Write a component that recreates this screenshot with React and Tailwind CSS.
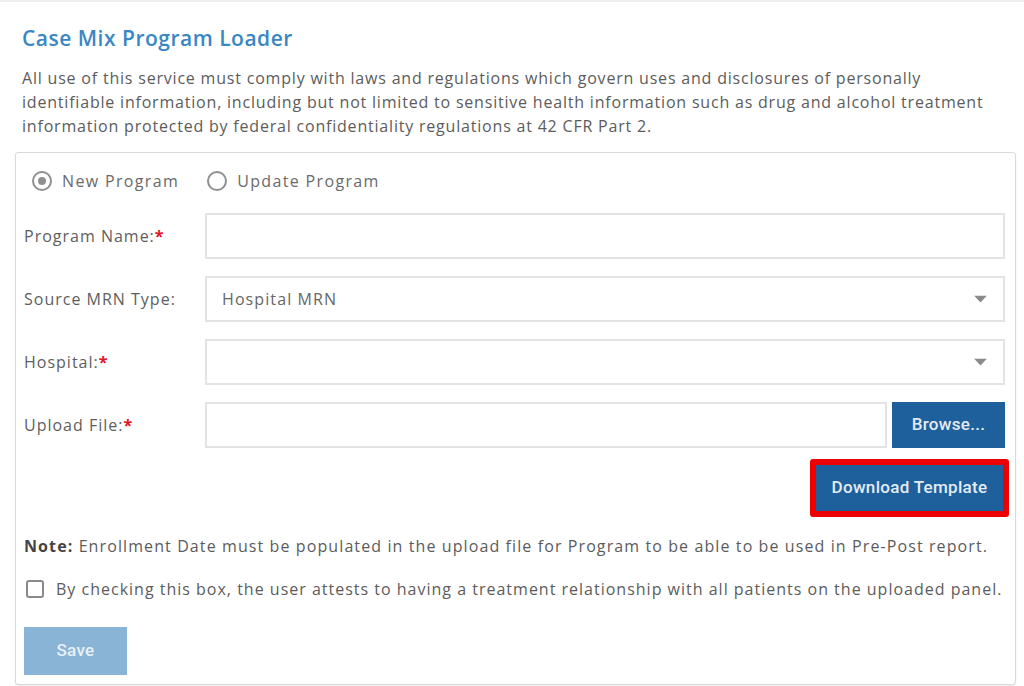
import { useState } from "react";

const labelFont = { fontFamily: "'Open Sans', 'Liberation Sans', sans-serif" };
const btnFont = { fontFamily: "Roboto, 'Liberation Sans', sans-serif" };

function Req() {
  return <span className="text-[#e4151f] font-bold tracking-normal">*</span>;
}

function Caret() {
  return (
    <svg width="13" height="7" viewBox="0 0 13 7" className="absolute right-[16px] top-1/2 -translate-y-1/2">
      <path d="M0 0 L13 0 L6.5 7 Z" fill="#8a8a8a" />
    </svg>
  );
}

function Row({ label, children }) {
  return (
    <div className="flex items-center">
      <div className="w-[181px] shrink-0 text-[16px] text-[#5e5e5e] tracking-[1px]">{label}</div>
      <div className="flex-1 flex gap-[5px]">{children}</div>
    </div>
  );
}

export default function App() {
  const [mode, setMode] = useState("new");
  const [checked, setChecked] = useState(false);

  return (
    <div className="w-[1024px] h-[686px] bg-white overflow-hidden border-t-2 border-[#eeeeee]" style={labelFont}>
      <div className="pl-[22px] pt-[22px]">
        <h1 className="text-[21px] font-semibold text-[#3a87c5] leading-[28px] tracking-[0.5px]">Case Mix Program Loader</h1>
        <p className="mt-[14px] text-[16px] leading-[24px] text-[#5c5c5c] tracking-[0.8px] whitespace-nowrap">
          All use of this service must comply with laws and regulations which govern uses and disclosures of personally
          <br />
          identifiable information, including but not limited to sensitive health information such as drug and alcohol treatment
          <br />
          information protected by federal confidentiality regulations at 42 CFR Part 2.
        </p>
      </div>

      <div className="ml-[15px] w-[1001px] mt-[14px] h-[533px] border border-[#d9d9d9] rounded-[3px] shadow-[0_1px_2px_rgba(0,0,0,0.08)] pl-[8px] pr-[10px] pt-[16px]">
        <div className="flex items-center gap-[28px] pl-[8px] text-[16px] text-[#6a6a6a] tracking-[1.35px]">
          <label className="flex items-center gap-[10px] cursor-pointer" onClick={() => setMode("new")}>
            <span className="w-[20px] h-[20px] rounded-full border-2 border-[#8f8f8f] flex items-center justify-center">
              {mode === "new" && <span className="w-[8px] h-[8px] rounded-full bg-[#8f8f8f]" />}
            </span>
            New Program
          </label>
          <label className="flex items-center gap-[10px] cursor-pointer" onClick={() => setMode("update")}>
            <span className="w-[20px] h-[20px] rounded-full border-2 border-[#8f8f8f] flex items-center justify-center">
              {mode === "update" && <span className="w-[8px] h-[8px] rounded-full bg-[#8f8f8f]" />}
            </span>
            Update Program
          </label>
        </div>

        <div className="mt-[20px] flex flex-col gap-[17px]">
          <Row label={<>Program Name:<Req /></>}>
            <input className="flex-1 h-[46px] border-2 border-[#e3e3e3] outline-none px-[16px]" />
          </Row>
          <Row label="Source MRN Type:">
            <div className="relative flex-1 h-[46px] border-2 border-[#e3e3e3] flex items-center px-[15px] text-[16px] text-[#666] tracking-[1.1px]">
              Hospital MRN
              <Caret />
            </div>
          </Row>
          <Row label={<>Hospital:<Req /></>}>
            <div className="relative flex-1 h-[46px] border-2 border-[#e3e3e3]">
              <Caret />
            </div>
          </Row>
          <Row label={<>Upload File:<Req /></>}>
            <input className="flex-1 h-[46px] border-2 border-[#e3e3e3] outline-none px-[16px]" />
            <button
              className="w-[113px] h-[46px] bg-[#1e609c] text-[#e3ecf4] text-[17px] font-medium tracking-[0.3px]"
              style={btnFont}
            >
              Browse...
            </button>
          </Row>
        </div>

        <div className="flex justify-end mt-[11px] -mr-[4px]">
          <div className="border-[6px] border-[#ee0000] rounded-[3px]">
            <button
              className="w-[187px] h-[46px] bg-[#1e609c] text-[#e3ecf4] text-[17px] font-medium tracking-[0.3px]"
              style={btnFont}
            >
              Download Template
            </button>
          </div>
        </div>

        <p className="mt-[17px] text-[16px] text-[#5c5c5c] tracking-[1.1px] whitespace-nowrap">
          <span className="font-bold text-[#444]">Note:</span> Enrollment Date must be populated in the upload file for Program to be able to be used in Pre-Post report.
        </p>

        <label className="mt-[19px] flex items-center gap-[12px] text-[16px] text-[#5c5c5c] tracking-[1px] whitespace-nowrap cursor-pointer">
          <span
            onClick={() => setChecked(!checked)}
            className="ml-[2px] w-[18px] h-[18px] border-2 border-[#8a8a8a] rounded-[3px] flex items-center justify-center text-[12px] leading-none text-[#555]"
          >
            {checked ? "✓" : ""}
          </span>
          By checking this box, the user attests to having a treatment relationship with all patients on the uploaded panel.
        </label>

        <button
          disabled
          className="mt-[26px] w-[103px] h-[48px] bg-[#8ab4d5] text-[#e8f0f7] text-[17px] font-medium tracking-[0.3px]"
          style={btnFont}
        >
          Save
        </button>
      </div>
    </div>
  );
}
